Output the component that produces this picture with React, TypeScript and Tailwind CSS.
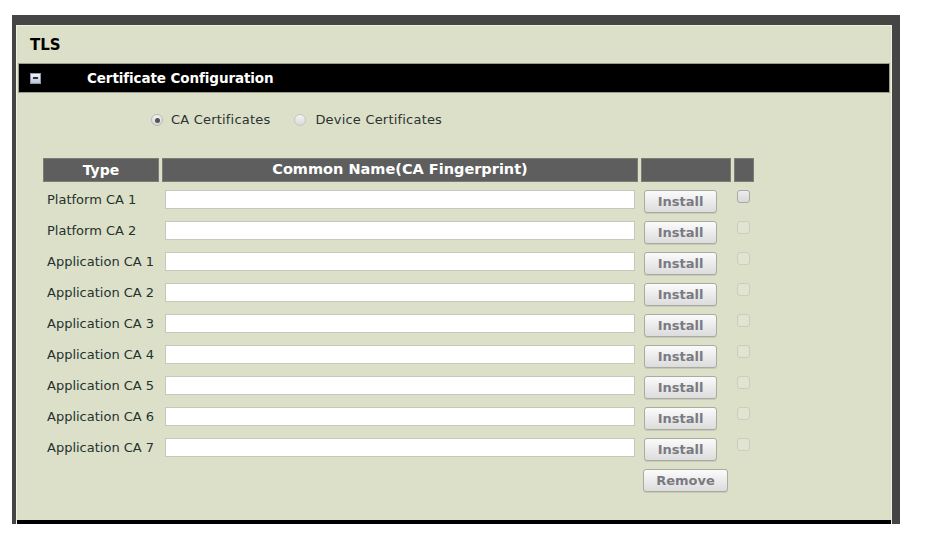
import React from "react";

const rows = [
  { label: "Platform CA 1", active: true },
  { label: "Platform CA 2" },
  { label: "Application CA 1" },
  { label: "Application CA 2" },
  { label: "Application CA 3" },
  { label: "Application CA 4" },
  { label: "Application CA 5" },
  { label: "Application CA 6" },
  { label: "Application CA 7" },
];

function Btn({ children, w }: { children: React.ReactNode; w: string }) {
  return (
    <button
      className={`${w} h-[23px] rounded-[3px] border border-[#a9aba0] bg-gradient-to-b from-[#fbfbfb] to-[#dcdcdc] text-[13px] font-bold text-[#7a7a82] leading-none shadow-[0_1px_0_#c8cab8]`}
    >
      {children}
    </button>
  );
}

export default function App() {
  return (
    <div
      className="w-[932px] h-[541px] bg-white overflow-hidden"
      style={{ fontFamily: "Tahoma, 'DejaVu Sans', Verdana, sans-serif" }}
    >
      <div className="ml-[12px] mt-[15px] w-[888px] h-[509px] bg-[#454545] pl-[4px] pr-[8px] pt-[10px] overflow-hidden">
        <div className="h-full bg-[#dde0c9] border-x border-t border-[#eef0e2] flex flex-col">
          <div className="h-[37px] pl-[13px] flex items-center text-[15px] font-bold text-black pt-[2px]">
            TLS
          </div>
          <div className="mx-[1px] h-[30px] bg-black border border-[#9a9c8c] flex items-center">
            <div className="ml-[11px] w-[11px] h-[11px] bg-gradient-to-b from-[#f0f3fa] to-[#bcc4d8] border border-[#9098b0] flex items-center justify-center">
              <div className="w-[5px] h-[2px] bg-[#333]" />
            </div>
            <div className="ml-[46px] text-[13.5px] font-bold text-white tracking-[-0.1px]">
              Certificate Configuration
            </div>
          </div>
          <div className="h-[55px] flex items-center pl-[134px] text-[13px] text-[#2b3330] pb-[1px]">
            <span className="w-[12px] h-[12px] rounded-full border border-[#b8b8b8] bg-gradient-to-b from-[#f2f2f2] to-[#d6d6d6] flex items-center justify-center">
              <span className="w-[5px] h-[5px] rounded-full bg-[#555]" />
            </span>
            <span className="ml-[8px] tracking-[0.2px]">CA Certificates</span>
            <span className="ml-[24px] w-[12px] h-[12px] rounded-full border border-[#c4c4c4] bg-gradient-to-b from-[#f4f4f4] to-[#dadada]" />
            <span className="ml-[9px] tracking-[0.2px]">Device Certificates</span>
          </div>
          <div className="ml-[26px] mt-[10px]">
            <div className="grid grid-cols-[116px_476px_90px_20px] gap-x-[3px] h-[24px]">
              <div className="bg-[#5e5e5e] border border-[#7c7c74] flex items-center justify-center text-white text-[14px] font-bold">
                Type
              </div>
              <div className="bg-[#5e5e5e] border border-[#7c7c74] flex items-center justify-center text-white text-[14.5px] font-bold">
                Common Name(CA Fingerprint)
              </div>
              <div className="bg-[#5e5e5e] border border-[#7c7c74]" />
              <div className="bg-[#5e5e5e] border border-[#7c7c74]" />
            </div>
            <div className="mt-[2px] flex flex-col">
              {rows.map((r) => (
                <div
                  key={r.label}
                  className="grid grid-cols-[116px_476px_90px_20px] gap-x-[3px] h-[31px] items-center"
                >
                  <div className="pl-[4px] text-[13px] text-[#24322e] whitespace-nowrap">
                    {r.label}
                  </div>
                  <div className="px-[3px]">
                    <div className="h-[19px] bg-white border border-[#c6c8bb]" />
                  </div>
                  <div className="pl-[3px] pt-[2px]">
                    <Btn w="w-[73px]">Install</Btn>
                  </div>
                  <div className="pl-[3px] self-start pt-[6px]">
                    <div
                      className={
                        r.active
                          ? "w-[13px] h-[13px] rounded-[3px] border border-[#a8a8a8] bg-gradient-to-b from-[#eeeeee] to-[#d8d8d8]"
                          : "w-[13px] h-[13px] rounded-[3px] border border-[#cbcdbd] bg-[#e2e4d2]"
                      }
                    />
                  </div>
                </div>
              ))}
            </div>
            <div className="ml-[600px] mt-[5px]">
              <Btn w="w-[85px]">Remove</Btn>
            </div>
          </div>
          <div className="mt-auto h-[4px] bg-black" />
        </div>
      </div>
    </div>
  );
}
